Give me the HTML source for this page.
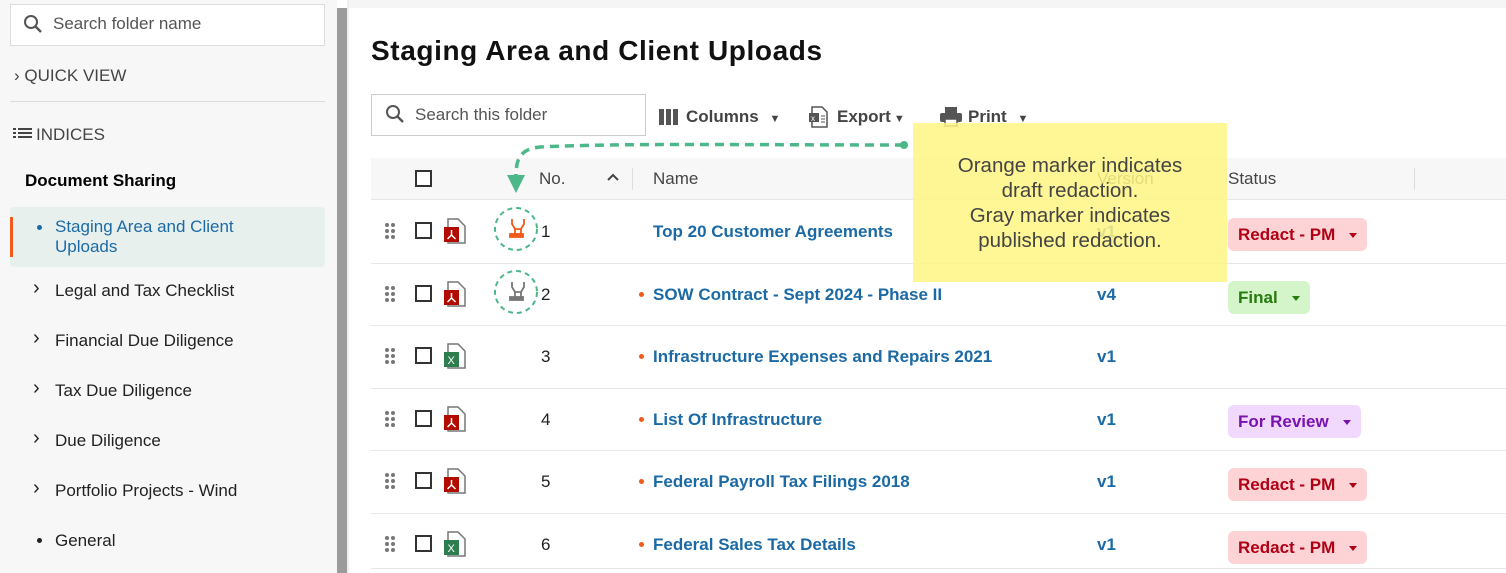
<!DOCTYPE html><html><head><meta charset="utf-8"><style>
*{box-sizing:border-box;margin:0;padding:0}
body{width:1506px;height:573px;overflow:hidden;background:#fff;font-family:"Liberation Sans",sans-serif;position:relative;color:#222}
.a{position:absolute}
.side{left:0;top:0;width:337px;height:573px;background:#f7f7f7}
.sb{left:337px;top:8px;width:10px;height:565px;background:#9b9b9b}
.nav{font-size:17px;color:#222;left:37px}
.nav::before{content:"›";position:absolute;left:-4px;font-size:20px;top:-4px}
.nav span{position:absolute;left:18px;white-space:nowrap}
.hdr{left:371px;top:158px;width:1135px;height:42px;background:#f7f7f7;border-bottom:1px solid #e6e6e6}
.row{left:371px;width:1135px;height:1px;background:#e6e6e6}
.cb{width:17px;height:17px;border:2px solid #333;background:#fff}
.num{font-size:17px;color:#222}
.nm{font-size:17px;font-weight:bold;color:#1b6aa5;white-space:nowrap}
.dot{width:5px;height:5px;border-radius:50%;background:#f05a1a}
.ver{font-size:17px;font-weight:bold;color:#1b6aa5}
.pill{height:33px;border-radius:6px;font-size:17px;font-weight:bold;padding:0 10px;line-height:33px;white-space:nowrap}
.pill::after{content:"";display:inline-block;margin-left:14px;border:4px solid transparent;border-top:5px solid currentColor;border-bottom:0;vertical-align:middle}
.red{background:#fdd3d6;color:#b00014}
.grn{background:#d3f5c9;color:#267a0e}
.pur{background:#f1d9fd;color:#7a12b0}
</style></head><body>
<div class="a side"></div>
<div class="a sb"></div>
<div class="a" style="left:347px;top:0;width:2px;height:573px;background:#eee"></div>
<div class="a" style="left:10px;top:4px;width:315px;height:42px;background:#fff;border:1px solid #ddd"></div>
<svg class="a" style="left:23px;top:14px" width="20" height="20" viewBox="0 0 20 20"><circle cx="8" cy="8" r="6" fill="none" stroke="#555" stroke-width="2"/><path d="M12.5 12.5L18 18" stroke="#555" stroke-width="2.4"/></svg>
<div class="a" style="left:53px;top:14px;font-size:17px;color:#555">Search folder name</div>
<div class="a" style="left:14px;top:66px;font-size:17px;color:#444">› QUICK VIEW</div>
<div class="a" style="left:10px;top:101px;width:315px;height:1px;background:#ddd"></div>
<svg class="a" style="left:13px;top:128px" width="20" height="12"><g fill="#444"><rect x="0" y="0" width="3" height="2"/><rect x="5" y="0" width="14" height="2"/><rect x="0" y="4" width="3" height="2"/><rect x="5" y="4" width="14" height="2"/><rect x="0" y="8" width="3" height="2"/><rect x="5" y="8" width="14" height="2"/></g></svg>
<div class="a" style="left:36px;top:125px;font-size:17px;color:#444">INDICES</div>
<div class="a" style="left:25px;top:171px;font-size:17px;font-weight:bold;color:#000">Document Sharing</div>
<div class="a" style="left:10px;top:207px;width:315px;height:60px;background:#e8f0ee;border-radius:4px"></div>
<div class="a" style="left:10px;top:217px;width:3px;height:40px;background:#f05a1a"></div>
<div class="a" style="left:37px;top:225px;width:5px;height:5px;border-radius:50%;background:#1b6aa5"></div>
<div class="a" style="left:55px;top:217px;font-size:17px;color:#1b6aa5;line-height:20px">Staging Area and Client<br>Uploads</div>
<div class="a nav" style="top:281px"><span>Legal and Tax Checklist</span></div>
<div class="a nav" style="top:331px"><span>Financial Due Diligence</span></div>
<div class="a nav" style="top:381px"><span>Tax Due Diligence</span></div>
<div class="a nav" style="top:431px"><span>Due Diligence</span></div>
<div class="a nav" style="top:481px"><span>Portfolio Projects - Wind</span></div>
<div class="a" style="left:37px;top:538px;width:5px;height:5px;border-radius:50%;background:#222"></div>
<div class="a" style="left:55px;top:531px;font-size:17px">General</div>

<div class="a" style="left:349px;top:0;width:1157px;height:8px;background:#f5f5f5"></div>
<div class="a" style="left:371px;top:35px;font-size:28px;letter-spacing:0.6px;font-weight:bold;color:#111;white-space:nowrap">Staging Area and Client Uploads</div>
<div class="a" style="left:371px;top:94px;width:275px;height:42px;border:1px solid #ccc;background:#fff"></div>
<svg class="a" style="left:385px;top:104px" width="20" height="20" viewBox="0 0 20 20"><circle cx="8" cy="8" r="6" fill="none" stroke="#555" stroke-width="2"/><path d="M12.5 12.5L18 18" stroke="#555" stroke-width="2.4"/></svg>
<div class="a" style="left:415px;top:105px;font-size:17px;color:#555">Search this folder</div>
<svg class="a" style="left:659px;top:109px" width="19" height="16"><g fill="#555"><rect x="0" y="0" width="5" height="16"/><rect x="7" y="0" width="5" height="16"/><rect x="14" y="0" width="5" height="16"/></g></svg>
<div class="a" style="left:686px;top:107px;font-size:17px;font-weight:bold;color:#444">Columns <span style="font-size:11px;margin-left:6px">▼</span></div>
<svg class="a" style="left:809px;top:106px" width="19" height="22"><path d="M3 1h10l5 5v15H3z" fill="#fff" stroke="#555" stroke-width="1.5"/><rect x="0" y="7" width="10" height="9" fill="#555"/><text x="2" y="15" font-size="8" fill="#fff" font-family="Liberation Sans">x</text><path d="M12 10h4M12 13h4M12 16h4" stroke="#555"/></svg>
<div class="a" style="left:837px;top:107px;font-size:17px;font-weight:bold;color:#444">Export<span style="font-size:11px;margin-left:3px">▼</span></div>
<svg class="a" style="left:940px;top:107px" width="22" height="20"><rect x="5" y="0" width="12" height="6" fill="#555"/><rect x="0" y="6" width="22" height="9" rx="2" fill="#555"/><rect x="5" y="12" width="12" height="7" fill="#fff" stroke="#555" stroke-width="1.5"/></svg>
<div class="a" style="left:968px;top:107px;font-size:17px;font-weight:bold;color:#444">Print <span style="font-size:11px;margin-left:6px">▼</span></div>

<div class="a hdr"></div>
<div class="a cb" style="left:415px;top:170px"></div>
<div class="a" style="left:539px;top:169px;font-size:17px;color:#444">No.</div>
<svg class="a" style="left:606px;top:173px" width="14" height="9"><path d="M2 7L7 2L12 7" fill="none" stroke="#444" stroke-width="2"/></svg>
<div class="a" style="left:632px;top:168px;width:1px;height:22px;background:#ddd"></div>
<div class="a" style="left:653px;top:169px;font-size:17px;color:#444">Name</div>
<div class="a" style="left:1097px;top:169px;font-size:17px;color:#444">Version</div>
<div class="a" style="left:1228px;top:169px;font-size:17px;color:#444">Status</div>
<div class="a" style="left:1414px;top:168px;width:1px;height:22px;background:#ddd"></div>

<div class="a row" style="top:263px"></div><div class="a row" style="top:325px"></div><div class="a row" style="top:388px"></div><div class="a row" style="top:450px"></div><div class="a row" style="top:513px"></div><div class="a row" style="top:568px"></div>

<svg class="a" style="left:370px;top:200px" width="130" height="373">
<defs>
<g id="dr" fill="#777"><circle cx="0" cy="0" r="2"/><circle cx="6" cy="0" r="2"/><circle cx="0" cy="6" r="2"/><circle cx="6" cy="6" r="2"/><circle cx="0" cy="12" r="2"/><circle cx="6" cy="12" r="2"/></g>
<g id="pdf"><path d="M4 0h10l7 7v17H4z" fill="#fff" stroke="#777" stroke-width="1.5"/><rect x="0" y="8" width="15" height="15" fill="#b30b00"/><path d="M7.5 11v5M7.5 16l-4 4M7.5 16l4 4" stroke="#fff" stroke-width="1.5" fill="none"/></g>
<g id="xls"><path d="M4 0h10l7 7v17H4z" fill="#fff" stroke="#777" stroke-width="1.5"/><rect x="0" y="8" width="15" height="15" fill="#2e7d4f"/><text x="3.5" y="20" font-size="11" fill="#fff" font-family="Liberation Sans">X</text></g>
</defs>
<use href="#dr" x="17" y="25"/><use href="#pdf" x="74" y="19"/>
<use href="#dr" x="17" y="88"/><use href="#pdf" x="74" y="82"/>
<use href="#dr" x="17" y="150"/><use href="#xls" x="74" y="144"/>
<use href="#dr" x="17" y="213"/><use href="#pdf" x="74" y="207"/>
<use href="#dr" x="17" y="275"/><use href="#pdf" x="74" y="269"/>
<use href="#dr" x="17" y="338"/><use href="#xls" x="74" y="332"/>
</svg>
<div class="a cb" style="left:415px;top:222px"></div>
<div class="a cb" style="left:415px;top:285px"></div>
<div class="a cb" style="left:415px;top:347px"></div>
<div class="a cb" style="left:415px;top:410px"></div>
<div class="a cb" style="left:415px;top:472px"></div>
<div class="a cb" style="left:415px;top:535px"></div>

<svg class="a" style="left:490px;top:200px" width="55" height="125">
<circle cx="26" cy="29" r="21" fill="none" stroke="#4cb88a" stroke-width="2" stroke-dasharray="5 4"/>
<g stroke="#f05a1a" stroke-width="1.8" fill="none"><path d="M22 19v5l3 5h6l3-5v-5M25 29v5M31 29v5"/><rect x="20" y="34" width="13" height="3" fill="#f05a1a"/></g>
<circle cx="26" cy="92" r="21" fill="none" stroke="#4cb88a" stroke-width="2" stroke-dasharray="5 4"/>
<g stroke="#777" stroke-width="1.8" fill="none"><path d="M22 82v5l3 5h6l3-5v-5M25 92v5M31 92v5"/><rect x="20" y="97" width="13" height="3" fill="#777"/></g>
</svg>
<div class="a num" style="left:541px;top:222px">1</div>
<div class="a num" style="left:541px;top:285px">2</div>
<div class="a num" style="left:541px;top:347px">3</div>
<div class="a num" style="left:541px;top:410px">4</div>
<div class="a num" style="left:541px;top:472px">5</div>
<div class="a num" style="left:541px;top:535px">6</div>

<div class="a nm" style="left:653px;top:222px">Top 20 Customer Agreements</div>
<div class="a dot" style="left:639px;top:292px"></div><div class="a nm" style="left:653px;top:285px">SOW Contract - Sept 2024 - Phase II</div>
<div class="a dot" style="left:639px;top:354px"></div><div class="a nm" style="left:653px;top:347px">Infrastructure Expenses and Repairs 2021</div>
<div class="a dot" style="left:639px;top:417px"></div><div class="a nm" style="left:653px;top:410px">List Of Infrastructure</div>
<div class="a dot" style="left:639px;top:479px"></div><div class="a nm" style="left:653px;top:472px">Federal Payroll Tax Filings 2018</div>
<div class="a dot" style="left:639px;top:542px"></div><div class="a nm" style="left:653px;top:535px">Federal Sales Tax Details</div>

<div class="a ver" style="left:1097px;top:222px">v1</div>
<div class="a ver" style="left:1097px;top:285px">v4</div>
<div class="a ver" style="left:1097px;top:347px">v1</div>
<div class="a ver" style="left:1097px;top:410px">v1</div>
<div class="a ver" style="left:1097px;top:472px">v1</div>
<div class="a ver" style="left:1097px;top:535px">v1</div>

<div class="a pill red" style="left:1228px;top:218px">Redact - PM</div>
<div class="a pill grn" style="left:1228px;top:281px">Final</div>
<div class="a pill pur" style="left:1228px;top:405px">For Review</div>
<div class="a pill red" style="left:1228px;top:468px">Redact - PM</div>
<div class="a pill red" style="left:1228px;top:531px">Redact - PM</div>

<div class="a" style="left:913px;top:123px;width:314px;height:159px;background:rgba(255,244,130,.85)"></div>
<div class="a" style="left:913px;top:153px;width:314px;text-align:center;font-size:20.5px;line-height:25px;color:#444">Orange marker indicates<br>draft redaction.<br>Gray marker indicates<br>published redaction.</div>
<svg class="a" style="left:500px;top:135px" width="412" height="60"><path d="M404 10C250 10 120 8 40 12C22 14 16 22 16 40" fill="none" stroke="#4cb88a" stroke-width="3.5" stroke-dasharray="9 6"/><circle cx="404" cy="10" r="4" fill="#4cb88a"/><path d="M7 40L16 58L25 40Z" fill="#4cb88a"/></svg>
</body></html>
